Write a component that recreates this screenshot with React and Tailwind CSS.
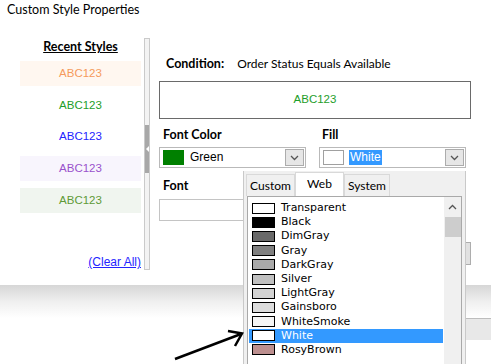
import React from 'react';

const recent = [
    { text: 'text-[#f59a5c]', bg: 'bg-[#fff7f0]' },
    { text: 'text-[#1e9e2a]', bg: 'bg-white' },
    { text: 'text-[#2323ff]', bg: 'bg-white' },
    { text: 'text-[#9a52cc]', bg: 'bg-[#f8f5fd]' },
    { text: 'text-[#5f9a37]', bg: 'bg-[#f0f5ef]' },
];

const webColors = [
    ['Transparent', '#ffffff'],
    ['Black', '#000000'],
    ['DimGray', '#696969'],
    ['Gray', '#808080'],
    ['DarkGray', '#a9a9a9'],
    ['Silver', '#c0c0c0'],
    ['LightGray', '#d3d3d3'],
    ['Gainsboro', '#dcdcdc'],
    ['WhiteSmoke', '#f5f5f5'],
    ['White', '#ffffff'],
    ['RosyBrown', '#bc8f8f'],
];

function Chevron({ up = false }) {
    return (
        <svg width="9" height="6" viewBox="0 0 9 6">
            <path
                d={up ? 'M1 5 L4.5 1.5 L8 5' : 'M1 1 L4.5 4.5 L8 1'}
                fill="none"
                stroke="#555"
                strokeWidth="1.3"
            />
        </svg>
    );
}

function Combo({ swatch, label, selected }) {
    return (
        <div className="w-[147px] h-[21px] border border-[#b9b9b9] bg-white flex items-center pl-[3px] pr-[1px]">
            <div className={`w-[21px] h-[15px] ${swatch}`} />
            <span
                className={`ml-[5px] px-[1px] text-[12px] leading-[15px] ${selected ? 'bg-[#3399ff] text-white' : 'text-black'}`}
            >
                {label}
            </span>
            <div className="ml-auto w-[19px] h-[17px] bg-[#e6e6e6] border border-[#acacac] flex items-center justify-center">
                <Chevron />
            </div>
        </div>
    );
}

export default function App() {
    return (
        <div className="relative w-[491px] h-[364px] overflow-hidden bg-white text-black font-['Liberation_Sans',Arial,sans-serif]">
            {/* title */}
            <div className="h-[30px] pl-[7px] pt-[1px] text-[12.5px] font-['Lato',sans-serif]">Custom Style Properties</div>

            {/* dialog body */}
            <div className="h-[255px] flex">
                {/* recent styles */}
                <div className="ml-[20px] w-[121px] flex flex-col pt-[10px] pb-[16px]">
                    <div className="text-center text-[12.5px] font-bold underline font-['Lato',sans-serif] leading-[14px]">
                        Recent Styles
                    </div>
                    <div className="mt-[7px] flex flex-col gap-[6.75px]">
                        {recent.map((r, i) => (
                            <div key={i} className={`h-[25px] flex items-center justify-center text-[11.5px] ${r.bg} ${r.text}`}>
                                ABC123
                            </div>
                        ))}
                    </div>
                    <a className="mt-auto self-end text-[12px] text-[#2424ff] underline leading-[14px]">(Clear All)</a>
                </div>

                {/* splitter */}
                <div className="ml-[3px] mt-[8px] w-[6px] h-[232px] border border-[#cacaca] bg-[#f3f3f3] flex flex-col">
                    <div className="h-[86px]" />
                    <div className="h-[48px] bg-[#a8a8a8] flex items-center justify-center">
                        <div className="w-0 h-0 border-y-[3px] border-y-transparent border-r-[3px] border-r-white" />
                    </div>
                </div>

                {/* settings */}
                <div className="ml-[9px] w-[312px] flex flex-col pt-[27px]">
                    <div className="flex items-center h-[14px] text-[12px]">
                        <span className="ml-[7px] font-bold font-['Lato',sans-serif] text-[12.5px]">Condition:</span>
                        <span className="ml-[13px] font-['Lato',sans-serif]">Order Status Equals Available</span>
                    </div>
                    <div className="mt-[10px] h-[38px] border border-[#6a6a6a] flex items-center justify-center text-[11.5px] text-[#1e9e2a]">
                        ABC123
                    </div>
                    <div className="mt-[7px] flex h-[14px] text-[12.5px] font-bold font-['Lato',sans-serif]">
                        <span className="ml-[4px] w-[159px]">Font Color</span>
                        <span>Fill</span>
                    </div>
                    <div className="mt-[7px] flex gap-[13px]">
                        <Combo swatch="bg-[#008000]" label="Green" />
                        <Combo swatch="bg-white border border-[#a0a0a0]" label="White" selected />
                    </div>
                    <div className="mt-[9px] h-[14px] text-[12.5px] font-bold font-['Lato',sans-serif]">
                        <span className="ml-[4px]">Font</span>
                    </div>
                    <div className="mt-[8px] w-[147px] h-[22px] border border-[#c4c4c4] bg-white" />
                    <div className="mt-[21px] flex justify-end">
                        <div className="w-[90px] h-[23px] border border-[#adadad] bg-[#e1e1e1]" />
                    </div>
                </div>
            </div>

            {/* window shadow */}
            <div className="h-[33px] bg-gradient-to-b from-[#d6d6d6] via-[#efefef] to-white" />
            <div className="flex justify-end">
                <div className="w-[91px] h-[22px] border-t border-[#bdbdbd] bg-[#e8e8e8]" />
            </div>

            {/* color picker popup */}
            <div className="absolute left-[243px] top-[171px] w-[223px] h-[200px] bg-[#f0f0f0] border-l border-r border-[#c9c9c9] flex flex-col">
                <div className="h-[25px] flex items-end pl-[2px] text-[12px] font-['Lato',sans-serif]">
                    <div className="w-[49px] h-[22px] border border-b-0 border-[#d9d9d9] bg-[#f0f0f0] flex items-center justify-center">Custom</div>
                    <div className="w-[49px] h-[24px] border border-b-0 border-[#d9d9d9] bg-white flex items-start pt-[2px] justify-center">Web</div>
                    <div className="w-[46px] h-[22px] border border-b-0 border-[#d9d9d9] bg-[#f0f0f0] flex items-center justify-center">System</div>
                </div>
                <div className="ml-[3px] mr-[3px] flex-1 border border-[#a9a9a9] bg-white flex">
                    <div className="flex-1 pt-[4px] pl-[1px] pr-[1px] font-['DejaVu_Sans',sans-serif] text-[11px]">
                        {webColors.map(([name, hex]) => (
                            <div
                                key={name}
                                className={`h-[14.2px] flex items-center pl-[3px] ${name === 'White' ? 'bg-[#3399ff] text-white' : 'text-black'}`}
                            >
                                <div className="w-[23px] h-[11px] border border-black" style={{ backgroundColor: hex }} />
                                <span className="ml-[6px] leading-[14px]">{name}</span>
                            </div>
                        ))}
                    </div>
                    <div className="w-[17px] bg-[#f0f0f0] flex flex-col items-center">
                        <div className="h-[20px] flex items-center"><Chevron up /></div>
                        <div className="w-[16px] h-[20px] bg-[#cdcdcd]" />
                    </div>
                </div>
            </div>

            {/* annotation arrow */}
            <svg className="absolute left-[170px] top-[325px]" width="80" height="40" viewBox="0 0 80 40">
                <path d="M5 34 L71 9" stroke="#000" strokeWidth="2.5" fill="none" />
                <path d="M58 6 L72 8.5 L65 21" stroke="#000" strokeWidth="2.5" fill="none" strokeLinejoin="miter" />
            </svg>
        </div>
    );
}
